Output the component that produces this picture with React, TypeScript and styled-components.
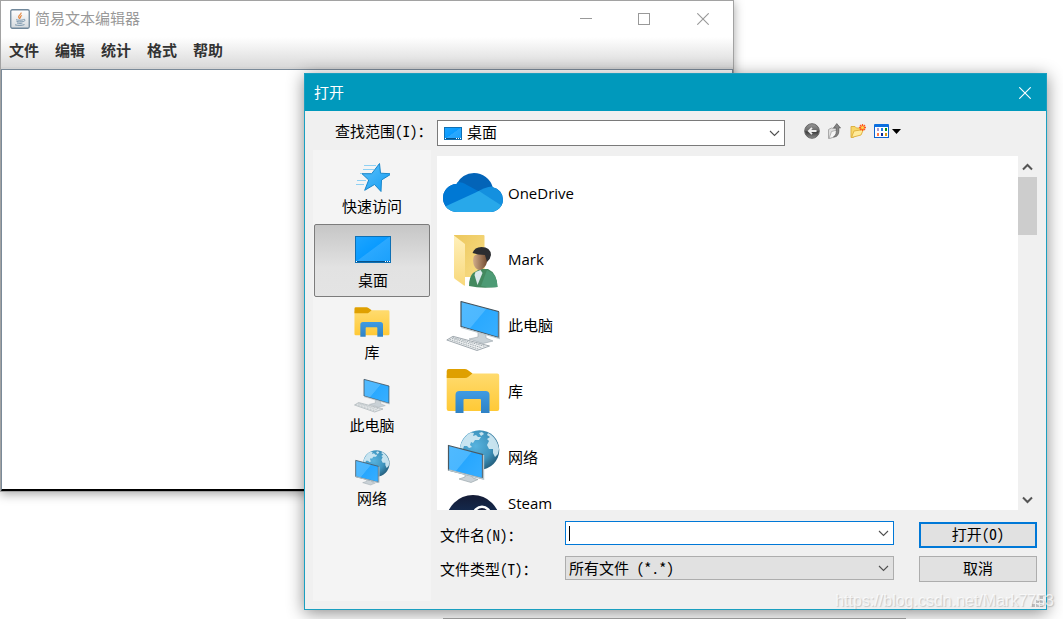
import React from "react";
import styled, { createGlobalStyle } from "styled-components";

const uiFont = '"Open Sans", "Noto Sans CJK SC", sans-serif';
const cjkFont = '"Noto Sans CJK SC", sans-serif';
const dialogFont = '"Noto Sans Mono CJK SC", "Noto Sans CJK SC", sans-serif';

const GlobalStyle = createGlobalStyle`
  * { box-sizing: border-box; }
  body { margin: 0; background: #fff; font-family: ${uiFont}; font-size: 15px; color: #000; }
  button, input, select, textarea { font: inherit; color: inherit; margin: 0; border-radius: 0; outline: none; }
`;

const Desktop = styled.main`
  position: relative;
  min-height: 100vh;
  overflow: hidden;
`;

/* ---------- editor window ---------- */

const EditorWindow = styled.section`
  position: absolute;
  top: 0;
  left: 0;
  right: 329px;
  display: flex;
  flex-direction: column;
  background: #fff;
  border: 1px solid #a2a2a2;
  box-shadow: 0 2px 10px rgba(0, 0, 0, 0.35);
`;

const EditorTitle = styled.header`
  display: flex;
  align-items: center;
  height: 36px;
  padding: 0 21px 0 9px;
  gap: 5px;
  color: #999;
  font-family: ${cjkFont};
`;

const TitleText = styled.h1`
  flex: 1;
  margin: 0;
  padding-bottom: 2px;
  font-size: 15px;
  font-weight: 400;
  line-height: 22px;
`;

const WindowControls = styled.div`
  display: flex;
  gap: 40px;
`;

const IconButton = styled.button`
  display: flex;
  align-items: center;
  justify-content: center;
  padding: 0;
  border: 0;
  background: none;
  svg { display: block; }
`;

const MenuBar = styled.nav`
  display: flex;
  gap: 16px;
  height: 31px;
  padding: 0 8px 4px;
  align-items: center;
  background: linear-gradient(#fff, #dadada);
  border-bottom: 1px solid #ccc;
`;

const MenuItem = styled.button`
  padding: 0;
  border: 0;
  background: none;
  color: #333;
  font-family: ${cjkFont};
  font-size: 15px;
  font-weight: 700;
  line-height: 24px;
`;

const TextArea = styled.textarea`
  display: block;
  width: 100%;
  height: 422px;
  margin-top: 1px;
  padding: 4px;
  resize: none;
  border: 1px solid #7a8a99;
  border-bottom: 2px solid #000;
  background: #fff;
  box-shadow: 0 -2px 0 #d4d4d4;
`;

/* ---------- open dialog ---------- */

const Dialog = styled.section`
  position: absolute;
  top: 73px;
  left: 304px;
  right: 16px;
  background: #f0f0f0;
  border: 1px solid #1a9fc0;
  box-shadow: 0 3px 16px rgba(0, 0, 0, 0.45);
`;

const DialogTitle = styled.header`
  display: flex;
  align-items: center;
  height: 37px;
  padding: 0 15px 0 9px;
  background: #0099bc;
  color: #fff;
  font-family: ${cjkFont};
`;

const DialogBody = styled.div`
  padding: 9px 9px 8px 8px;
`;

const LookRow = styled.div`
  display: flex;
`;

const LookLabel = styled.label`
  width: 124px;
  padding-left: 22px;
  white-space: nowrap;
  font-family: ${dialogFont};
  line-height: 22px;
`;

const Combo = styled.div`
  position: relative;
  display: flex;
  min-width: 0;
`;

const LookCombo = styled(Combo)`
  flex: 1;
  margin-right: 19px;
`;

const ComboIcon = styled.span`
  position: absolute;
  left: 7px;
  top: 7px;
  pointer-events: none;
  svg { display: block; }
`;

const ComboArrow = styled.span`
  position: absolute;
  right: 5px;
  top: 0;
  bottom: 0;
  display: flex;
  align-items: center;
  pointer-events: none;
`;

const Select = styled.select<{ $filled?: boolean }>`
  appearance: none;
  width: 100%;
  height: ${(p) => (p.$filled ? 24 : 26)}px;
  padding: ${(p) => (p.$filled ? "0 20px 2px 3px" : "0 20px 3px 29px")};
  border: 1px solid ${(p) => (p.$filled ? "#adadad" : "#7a7a7a")};
  background: ${(p) => (p.$filled ? "#e1e1e1" : "#fff")};
  font-family: ${dialogFont};
`;

const Toolbar = styled.div`
  display: flex;
  align-items: flex-start;
  gap: 7px;
  width: 233px;
  padding-top: 3px;
`;

const Content = styled.div`
  display: flex;
  gap: 6px;
  padding-top: 4px;
`;

const Places = styled.nav`
  width: 118px;
  padding: 1px;
  background: #f4f4f4;
`;

const Place = styled.button<{ $active?: boolean }>`
  display: flex;
  flex-direction: column;
  align-items: center;
  width: 100%;
  height: 73px;
  padding: ${(p) => (p.$active ? "7px 0 0 2px" : "6px 0 0")};
  border: 1px solid ${(p) => (p.$active ? "#7c7c7c" : "transparent")};
  border-radius: 2px;
  background: ${(p) => (p.$active ? "linear-gradient(#c6c6c6, #e2e2e2 60%, #e4e4e4)" : "none")};
  line-height: 24px;
  svg { display: block; }
`;

const Right = styled.div`
  flex: 1;
  min-width: 0;
  padding-top: 6px;
`;

const ListFrame = styled.div`
  display: flex;
  height: 354px;
`;

const FileList = styled.ul`
  flex: 1;
  margin: 0;
  padding: 4px 6px 0;
  overflow: hidden;
  list-style: none;
  background: #fff;
`;

const FileRow = styled.li<{ $top?: boolean }>`
  display: flex;
  align-items: ${(p) => (p.$top ? "flex-start" : "center")};
  gap: 5px;
  height: 66px;
  line-height: 26px;
`;

const FileIcon = styled.span`
  display: flex;
  justify-content: center;
  width: 60px;
  svg { display: block; }
`;

const ScrollBar = styled.div`
  display: flex;
  flex-direction: column;
  width: 19px;
`;

const ScrollButton = styled(IconButton)`
  height: 21px;
`;

const ScrollTrack = styled.div`
  flex: 1;
`;

const Thumb = styled.div`
  height: 58px;
  background: #cdcdcd;
`;

const Form = styled.form`
  display: grid;
  grid-template-columns: 125px minmax(0, 1fr) 118px;
  grid-template-rows: 27px 26px;
  row-gap: 8px;
  padding: 11px 0 19px 3px;
  font-family: ${dialogFont};
`;

const FormLabel = styled.label`
  align-self: end;
  white-space: nowrap;
  line-height: 26px;
`;

const FormCombo = styled(Combo)`
  align-self: start;
  margin-right: 25px;
`;

const NameInput = styled.input`
  width: 100%;
  height: 24px;
  padding: 0 20px 0 4px;
  border: 1px solid #0078d7;
  background: #fff;
`;

const Caret = styled.span`
  position: absolute;
  left: 4px;
  top: 5px;
  width: 1px;
  height: 15px;
  background: #000;
`;

const Button = styled.button<{ $primary?: boolean }>`
  align-self: end;
  height: 26px;
  padding: 0 0 2px;
  border: ${(p) => (p.$primary ? "2px solid #0078d7" : "1px solid #adadad")};
  background: #e1e1e1;
  line-height: 20px;
`;

const Grip = styled.span`
  position: absolute;
  right: 3px;
  bottom: 2px;
  svg { display: block; }
`;

const Watermark = styled.span`
  position: absolute;
  right: 9px;
  top: 591px;
  color: rgba(255, 255, 255, 0.7);
  font-family: "Liberation Sans", Arial, sans-serif;
  font-size: 16px;
  line-height: 20px;
  text-shadow: 1px 1px 1px rgba(120, 120, 120, 0.35);
  pointer-events: none;
`;

const HiddenEdge = styled.div`
  position: absolute;
  top: 618px;
  left: 443px;
  right: 157px;
  height: 1px;
  background: #aaa;
`;

/* ---------- drawings ---------- */

const JavaIcon = () => (
  <svg width="20" height="20" viewBox="0 0 20 20">
    <defs>
      <linearGradient id="jv" x1="0" y1="0" x2="0" y2="1">
        <stop offset="0" stopColor="#fff" />
        <stop offset="1" stopColor="#d5dade" />
      </linearGradient>
    </defs>
    <rect x=".75" y=".75" width="18.5" height="18.5" rx="1.5" fill="url(#jv)" stroke="#71889b" strokeWidth="1.3" />
    <path d="M11 3.500c1 1.800-3 2.800-2.400 4.500.3.800 1 1 1 2M12 6.500c-2 .8-2 1.500-1.300 2.800" fill="none" stroke="#e58a45" strokeWidth="1.200" />
    <path d="M6 10.700c2 .7 6 .6 7.500 0M6.500 12.400c2 .6 4.500.6 6.300 0M7 14c2 .5 4 .5 5.500 0M13.500 10.400c2-.4 2.200 1.400-.3 2.200M5 15.800c3 .9 7 .8 9.500-.2" fill="none" stroke="#6d8ca5" strokeWidth=".9" />
  </svg>
);

const CloseIcon = ({ color }: { color: string }) => (
  <svg width="12" height="12" viewBox="0 0 12 12">
    <path d="M.3 .3l11.4 11.4M11.7 .3L.3 11.7" stroke={color} strokeWidth="1.1" />
  </svg>
);

const Chevron = () => (
  <svg width="11" height="7" viewBox="0 0 11 7">
    <path d="M1 1l4.5 4.5L10 1" fill="none" stroke="#505050" strokeWidth="1.1" />
  </svg>
);

const ScrollChevron = ({ down }: { down?: boolean }) => (
  <svg width="11" height="8" viewBox="0 0 11 8">
    <path d={down ? "M1 1.5l4.5 4.5L10 1.5" : "M1 6.5L5.5 2 10 6.5"} fill="none" stroke="#555" strokeWidth="2" />
  </svg>
);

const BackIcon = () => (
  <svg width="16" height="16" viewBox="0 0 16 16">
    <defs>
      <linearGradient id="bk" x1="0" y1="0" x2="0" y2="1">
        <stop offset="0" stopColor="#999" />
        <stop offset=".5" stopColor="#666" />
        <stop offset=".55" stopColor="#3a3a3a" />
        <stop offset="1" stopColor="#909090" />
      </linearGradient>
    </defs>
    <circle cx="8" cy="8" r="7.3" fill="url(#bk)" stroke="#666" />
    <path d="M12.500 8H5M8 4.800L4.800 8 8 11.200" fill="none" stroke="#eee" strokeWidth="1.800" />
  </svg>
);

const UpIcon = () => (
  <svg width="16" height="16" viewBox="0 0 16 16">
    <path d="M1.500 6.500l3-1.500 1.500.5 4-1V13l-8.500 2.500z" fill="#dedede" stroke="#aaa" />
    <path d="M2 15.500l2.500-7 7.500-2-2.500 7z" fill="#f6f6f6" stroke="#a5a5a5" strokeWidth=".8" />
    <path d="M6.500 13.800c2.500-1 3.200-4 2.700-8.800H6.500L9.800.6 13.500 5h-2c1 5.500-.5 8.500-5 8.800z" fill="#858585" stroke="#585858" strokeWidth=".7" />
  </svg>
);

const NewFolderIcon = () => (
  <svg width="16" height="16" viewBox="0 0 16 16">
    <path d="M1 3.500h4l1.500 1.500H12v3L3 14.500H1z" fill="#f8d768" stroke="#d9ad3c" strokeWidth=".9" />
    <path d="M1.500 14.500L4 8l9.500-1.500-2.500 5.500z" fill="#ffeb9a" stroke="#dcae3a" strokeWidth=".9" />
    <g stroke="#ff5a1f" strokeWidth="1.300">
      <path d="M12.500 1v7M9 4.500h7M10 2l5 5M15 2l-5 5" />
    </g>
    <circle cx="12.500" cy="4.500" r="1.500" fill="#ffd34d" />
  </svg>
);

const ViewIcon = () => (
  <svg width="28" height="16" viewBox="0 0 28 16">
    <rect x="1.500" y="2.500" width="14" height="12" fill="#fff" stroke="#0b62cf" />
    <rect x="1" y="1" width="15" height="3" rx="1" fill="#0b6fe0" />
    <rect x="4" y="5" width="2" height="3" fill="#a79bd0" />
    <rect x="8" y="5" width="2" height="3" fill="#1f7fe0" />
    <rect x="12" y="5" width="2" height="3" fill="#0c8f1c" />
    <rect x="4" y="10" width="2" height="3" fill="#ff7a4a" />
    <rect x="8" y="10" width="2" height="3" fill="#0b2e96" />
    <rect x="12" y="10" width="2" height="3" fill="#d99a10" />
    <path d="M19 6h9l-4.500 5z" fill="#000" />
  </svg>
);

const DesktopIcon = ({ w, h, id }: { w: number; h: number; id: string }) => (
  <svg width={w} height={h} viewBox={`0 0 ${w} ${h}`}>
    <defs>
      <linearGradient id={id} x1="0" y1="0" x2="1" y2="1">
        <stop offset="0" stopColor="#1ea5ff" />
        <stop offset=".48" stopColor="#0a9bff" />
        <stop offset=".5" stopColor="#2aa8ff" />
        <stop offset="1" stopColor="#1ba0fb" />
      </linearGradient>
    </defs>
    <rect x=".5" y=".5" width={w - 1} height={h - 1} fill={`url(#${id})`} stroke="#0f70b4" />
    <rect x="1" y={h - 2} width={w - 2} height="1" fill="#07538c" />
    <path d={`M1 ${h - 1.5}h1M${w - 6} ${h - 1.5}h1M${w - 4} ${h - 1.5}h1M${w - 2} ${h - 1.5}h1`} stroke="#fff" />
  </svg>
);

const PlaceDesktopIcon = () => (
  <svg width="36" height="36" viewBox="0 0 36 36">
    <g transform="translate(0 4)">
      <DesktopIcon w={36} h={27} id="pd" />
    </g>
  </svg>
);

const StarIcon = () => (
  <svg width="36" height="36" viewBox="0 0 36 36">
    <defs>
      <linearGradient id="st" x1="0" y1="0" x2="1" y2="1">
        <stop offset="0" stopColor="#5cc0f8" />
        <stop offset="1" stopColor="#139df5" />
      </linearGradient>
    </defs>
    <path d="M25.500 5.500l1 9.700 11 .6-10 6.200-.5 11.500-6.500-7-9.800 5.800 4-10.300-6.700-6.300 9.700 0z" fill="url(#st)" stroke="#1786cb" strokeLinejoin="round" />
    <path d="M10 7.500h12M9 11.500h11M6 15.500h2M3 22.500h9M2 26.500h8" stroke="#8fd0f3" />
  </svg>
);

const LibraryIcon = ({ size, id }: { size: number; id: string }) => (
  <svg width={size} height={size} viewBox="0 0 54 54">
    <defs>
      <linearGradient id={id} x1="0" y1="0" x2="0" y2="1">
        <stop offset="0" stopColor="#ffdb6e" />
        <stop offset="1" stopColor="#ffc936" />
      </linearGradient>
      <linearGradient id={id + "b"} x1="0" y1="0" x2="0" y2="1">
        <stop offset="0" stopColor="#3f9be3" />
        <stop offset="1" stopColor="#2f82c5" />
      </linearGradient>
    </defs>
    <path d="M.7 11h20l6-1.500h24.500q2 0 2 2v33.500q0 2-2 2H2.700q-2 0-2-2z" fill={`url(#${id})`} />
    <path d="M.7 7q0-2 2-2h16q1.800 0 3 1l4.800 3.500-4.500 3.500q-1 1-3 1H.7z" fill="#dfa000" />
    <path d="M9.500 49V31q0-4 4-4h26q4 0 4 4v18H35V36q0-1-1-1H18.500q-1 0-1 1v13z" fill={`url(#${id}b)`} />
  </svg>
);

const PcIcon = ({ size, id }: { size: number; id: string }) => (
  <svg width={size} height={size} viewBox="0 0 54 54">
    <defs>
      <linearGradient id={id} x1="0" y1="0" x2="1" y2=".8">
        <stop offset="0" stopColor="#52bbff" />
        <stop offset=".5" stopColor="#4db8ff" />
        <stop offset=".52" stopColor="#2aa9ff" />
        <stop offset="1" stopColor="#36aeff" />
      </linearGradient>
    </defs>
    <path d="M32 34l8 2v4l7 3-10 2.500-14-4.500 9-2z" fill="#c9d1d6" stroke="#9aa5ab" strokeWidth=".6" />
    <path d="M15 3.500l37.500 10v26L15 28.500z" fill={`url(#${id})`} stroke="#44525c" strokeWidth="1.200" strokeLinejoin="round" />
    <path d="M53.300 14v26.500L15 29.500" fill="none" stroke="#bac8cf" strokeWidth="1.200" />
    <path d="M.8 42L7 38.300l36.500 9.700L31 52.500z" fill="#eef0f1" stroke="#98a2a8" strokeWidth=".9" />
    <path d="M3.500 41.300l29.500 10M5.800 40.200l30 9.700M6.800 39.500l32.500 9" stroke="#a3adb2" strokeWidth="1" strokeDasharray="1.600 .8" />
  </svg>
);

const NetworkIcon = ({ size, id }: { size: number; id: string }) => (
  <svg width={size} height={size} viewBox="0 0 54 54">
    <defs>
      <radialGradient id={id} cx=".4" cy=".4" r=".65">
        <stop offset="0" stopColor="#57b3df" />
        <stop offset=".6" stopColor="#3f95bf" />
        <stop offset="1" stopColor="#245e7c" />
      </radialGradient>
      <linearGradient id={id + "s"} x1="0" y1="0" x2="1" y2=".8">
        <stop offset="0" stopColor="#50baff" />
        <stop offset=".5" stopColor="#4ab7ff" />
        <stop offset=".52" stopColor="#27a7ff" />
        <stop offset="1" stopColor="#35adff" />
      </linearGradient>
    </defs>
    <circle cx="33.500" cy="20" r="19.800" fill={`url(#${id})`} />
    <path d="M14.500 15.500c2-6 6-11 10.500-13l3 .5-1 3 3-1 2 2 3 0-2 3-4 0-2 3-2-1-1 3 2 2-3 1-2-2-3 0-1 3-3-1zM33 3l3-1 2 2-3 2zM42 3c6 3 10 9 11 16l-1 5-3 3-2-4 0-4-4 0-2-4 2-4-2-2 3-2-3-2zM17 20l3 0 2 3-1 2-4-3z" fill="#d2eaf3" opacity=".93" />
    <path d="M19 41l8 2v5l5 1.500-7 3-12-3.500 6-2z" fill="#c9d1d6" stroke="#919da3" strokeWidth=".6" />
    <path d="M2.500 15.500l34 9v24l-34-8.500z" fill={`url(#${id}s)`} stroke="#4a5861" strokeWidth="1.200" />
    <path d="M37.500 25v24l-35-9" fill="none" stroke="#b6c5cc" strokeWidth="1.400" />
  </svg>
);

const CloudIcon = () => (
  <svg width="60" height="40" viewBox="0 0 60 40">
    <defs>
      <clipPath id="cl">
        <circle cx="14" cy="25" r="14" />
        <circle cx="31" cy="19.500" r="19.500" />
        <circle cx="47.500" cy="26.500" r="12.500" />
        <rect x="14" y="22" width="33.500" height="17" />
      </clipPath>
    </defs>
    <g clipPath="url(#cl)">
      <path d="M0 0h60v40H0z" fill="#0364b8" />
      <path d="M0 10l14-1q6 0 10 3l12 6.500-3 6L0 38z" fill="#0078d4" />
      <path d="M33 19.500q9-5.500 16-6l11 3v20z" fill="#1490df" />
      <path d="M0 34.500L36 18l24 15.500V40H0z" fill="#28a8ea" />
    </g>
  </svg>
);

const UserFolderIcon = () => (
  <svg width="54" height="60" viewBox="0 -5 54 60">
    <defs>
      <linearGradient id="uf" x1="0" y1="0" x2="1" y2="1">
        <stop offset="0" stopColor="#ecc75c" />
        <stop offset="1" stopColor="#f8dd87" />
      </linearGradient>
      <linearGradient id="fc" x1="0" y1="0" x2="1" y2="0">
        <stop offset="0" stopColor="#d2ad8a" />
        <stop offset="1" stopColor="#704a30" />
      </linearGradient>
      <linearGradient id="fl" x1="0" y1="0" x2="0" y2="1">
        <stop offset="0" stopColor="#fff0ba" />
        <stop offset="1" stopColor="#f8d87b" />
      </linearGradient>
    </defs>
    <path d="M8 1h29.500q1 0 1 1v41H8z" fill="url(#uf)" />
    <path d="M8 1.500l11 8.500v41q0 1-1 .5L9 45q-1-.5-1-2z" fill="url(#fl)" />
    <path d="M23 52q0-9 4-13l7-4 8 0q9 4 9.500 18-16 2-28.500-1z" fill="#43895f" />
    <path d="M29.500 38l-1 3 3 10 5-12-2-3z" fill="#dce9ec" />
    <path d="M41 36l-6 16q9 2 16.500 1 0-13-10.500-17z" fill="#4d9b75" />
    <path d="M28 22q5-5 13-2 1 7-1 11-3 5-7 5-4-1-5.500-6-1-5 .5-8z" fill="url(#fc)" />
    <path d="M26.500 19q2-6 9-6 9 0 9.500 8-.5 4-4 7l-2-7q-7 0-12.500-2z" fill="#2c2d30" />
  </svg>
);

const SteamIcon = () => (
  <svg width="54" height="60" viewBox="0 0 54 60">
    <defs>
      <linearGradient id="sm" x1="0" y1="0" x2="0" y2="1">
        <stop offset="0" stopColor="#141b35" />
        <stop offset="1" stopColor="#154a82" />
      </linearGradient>
    </defs>
    <circle cx="27" cy="32" r="27" fill="url(#sm)" />
    <circle cx="36" cy="25" r="9.500" fill="#fff" />
    <circle cx="36" cy="25" r="7" fill="#161e3a" />
    <circle cx="36" cy="25" r="5" fill="#fff" />
  </svg>
);

const places = [
  { name: "快速访问", icon: <StarIcon /> },
  { name: "桌面", icon: <PlaceDesktopIcon />, active: true },
  { name: "库", icon: <LibraryIcon size={36} id="pl" /> },
  { name: "此电脑", icon: <PcIcon size={36} id="pp" /> },
  { name: "网络", icon: <NetworkIcon size={36} id="pn" /> },
];

const files = [
  { name: "OneDrive", icon: <CloudIcon /> },
  { name: "Mark", icon: <UserFolderIcon /> },
  { name: "此电脑", icon: <PcIcon size={54} id="fp" /> },
  { name: "库", icon: <LibraryIcon size={54} id="fl2" /> },
  { name: "网络", icon: <NetworkIcon size={54} id="fn" /> },
  { name: "Steam", icon: <SteamIcon />, top: true },
];

export default function App() {
  return (
    <Desktop>
      <GlobalStyle />
      <EditorWindow aria-label="简易文本编辑器">
        <EditorTitle>
          <JavaIcon />
          <TitleText>简易文本编辑器</TitleText>
          <WindowControls>
            <IconButton aria-label="最小化">
              <svg width="18" height="12" viewBox="0 0 18 12"><path d="M2 5.500h12" stroke="#999" /></svg>
            </IconButton>
            <IconButton aria-label="最大化">
              <svg width="18" height="12" viewBox="0 0 18 12"><rect x="2.500" y=".5" width="11" height="11" fill="none" stroke="#999" /></svg>
            </IconButton>
            <IconButton aria-label="关闭">
              <svg width="18" height="12"><g transform="translate(3 0)"><CloseIcon color="#999" /></g></svg>
            </IconButton>
          </WindowControls>
        </EditorTitle>
        <MenuBar>
          {["文件", "编辑", "统计", "格式", "帮助"].map((m) => (
            <MenuItem key={m}>{m}</MenuItem>
          ))}
        </MenuBar>
        <TextArea aria-label="文本" />
      </EditorWindow>

      <HiddenEdge />

      <Dialog role="dialog" aria-labelledby="open-title">
        <DialogTitle>
          <TitleText as="h2" id="open-title">打开</TitleText>
          <IconButton aria-label="关闭"><CloseIcon color="#fff" /></IconButton>
        </DialogTitle>
        <DialogBody>
          <LookRow>
            <LookLabel htmlFor="look">查找范围(I)：</LookLabel>
            <LookCombo>
              <Select id="look"><option>桌面</option></Select>
              <ComboIcon><DesktopIcon w={18} h={13} id="cd" /></ComboIcon>
              <ComboArrow><Chevron /></ComboArrow>
            </LookCombo>
            <Toolbar>
              <IconButton aria-label="后退"><BackIcon /></IconButton>
              <IconButton aria-label="向上一级"><UpIcon /></IconButton>
              <IconButton aria-label="新建文件夹"><NewFolderIcon /></IconButton>
              <IconButton aria-label="查看"><ViewIcon /></IconButton>
            </Toolbar>
          </LookRow>
          <Content>
            <Places aria-label="位置">
              {places.map((p) => (
                <Place key={p.name} $active={p.active}>
                  {p.icon}
                  {p.name}
                </Place>
              ))}
            </Places>
            <Right>
              <ListFrame>
                <FileList>
                  {files.map((f) => (
                    <FileRow key={f.name} $top={f.top}>
                      <FileIcon>{f.icon}</FileIcon>
                      {f.name}
                    </FileRow>
                  ))}
                </FileList>
                <ScrollBar>
                  <ScrollButton aria-label="向上滚动"><ScrollChevron /></ScrollButton>
                  <ScrollTrack><Thumb /></ScrollTrack>
                  <ScrollButton aria-label="向下滚动"><ScrollChevron down /></ScrollButton>
                </ScrollBar>
              </ListFrame>
              <Form onSubmit={(e) => e.preventDefault()}>
                <FormLabel htmlFor="name">文件名(N)：</FormLabel>
                <FormCombo>
                  <NameInput id="name" type="text" />
                  <Caret />
                  <ComboArrow><Chevron /></ComboArrow>
                </FormCombo>
                <Button type="submit" $primary>打开(O)</Button>
                <FormLabel htmlFor="type">文件类型(T)：</FormLabel>
                <FormCombo>
                  <Select id="type" $filled><option>所有文件 (*.*)</option></Select>
                  <ComboArrow><Chevron /></ComboArrow>
                </FormCombo>
                <Button type="button">取消</Button>
              </Form>
            </Right>
          </Content>
        </DialogBody>
        <Grip>
          <svg width="11" height="11" viewBox="0 0 11 11">
            <path d="M8 0h3v3H8zM8 4h3v3H8zM4 4h3v3H4zM8 8h3v3H8zM4 8h3v3H4zM0 8h3v3H0z" fill="#bfbfbf" />
          </svg>
        </Grip>
      </Dialog>
      <Watermark>https://blog.csdn.net/Mark7753</Watermark>
    </Desktop>
  );
}
